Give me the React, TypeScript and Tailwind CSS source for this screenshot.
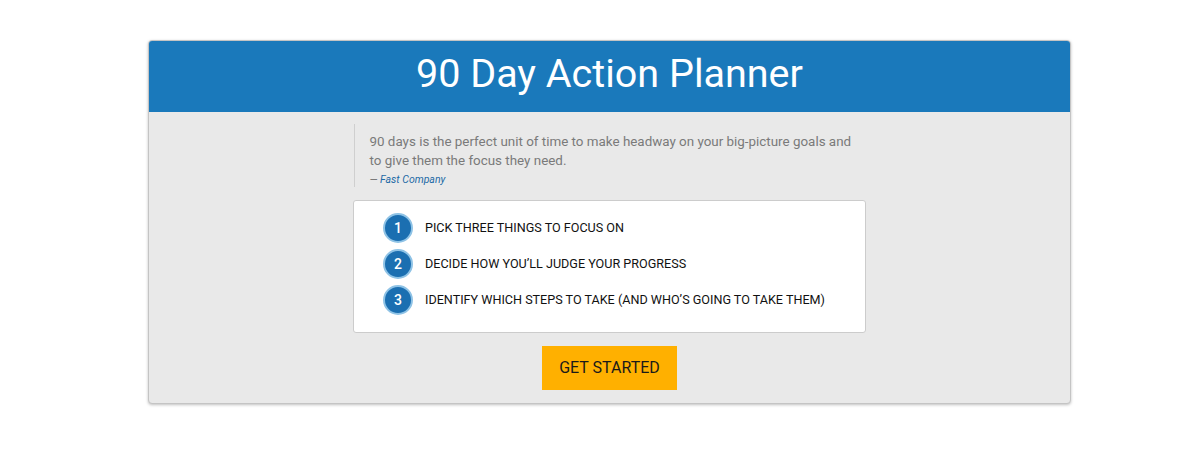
const steps = [
  "PICK THREE THINGS TO FOCUS ON",
  "DECIDE HOW YOU’LL JUDGE YOUR PROGRESS",
  "IDENTIFY WHICH STEPS TO TAKE (AND WHO’S GOING TO TAKE THEM)",
];

export default function App() {
  return (
    <div className="min-h-[468px] bg-white pt-[40px] font-['Roboto',sans-serif]">
      <div className="ml-[148px] w-[923px] overflow-hidden rounded-[4px] border border-[#c4c4c4] bg-[#e9e9e9] shadow-[0_1px_3px_rgba(0,0,0,0.25)]">
        <div className="flex h-[71px] items-center justify-center bg-[#1a79bb] pb-[5px]">
          <h1 className="text-[39.5px] font-normal text-white">90 Day Action Planner</h1>
        </div>

        <div className="flex flex-col items-center pb-[13px] pt-[12px]">
          <blockquote className="w-[512px] border-l border-[#cfcfcf] pl-[15px] pt-[8px]">
            <p className="w-[484px] text-[13.4px] leading-[19px] text-[#7a7a7a]">
              90 days is the perfect unit of time to make headway on your big-picture goals and to give them the focus they need.
            </p>
            <p className="mt-[3px] text-[10.5px] italic leading-[14px] text-[#7a7a7a]">
              — <span className="text-[#1d6aa6]">Fast Company</span>
            </p>
          </blockquote>

          <div className="mt-[13px] w-[513px] rounded-[3px] border border-[#cccccc] bg-white pb-[17px] pl-[29px] pt-[12px]">
            <ul className="flex flex-col gap-[6px]">
              {steps.map((step, index) => (
                <li key={index} className="flex items-center">
                  <span className="flex h-[30px] w-[30px] items-center justify-center rounded-full border-2 border-[#8fc3e6] bg-[#1b6fb1] text-[14px] font-medium text-white">
                    {index + 1}
                  </span>
                  <span className="ml-[12px] text-[12.6px] text-[#111]">{step}</span>
                </li>
              ))}
            </ul>
          </div>

          <button className="mt-[13px] h-[44px] w-[135px] bg-[#ffb000] text-[16px] text-[#1a1a1a]">
            GET STARTED
          </button>
        </div>
      </div>
    </div>
  );
}
